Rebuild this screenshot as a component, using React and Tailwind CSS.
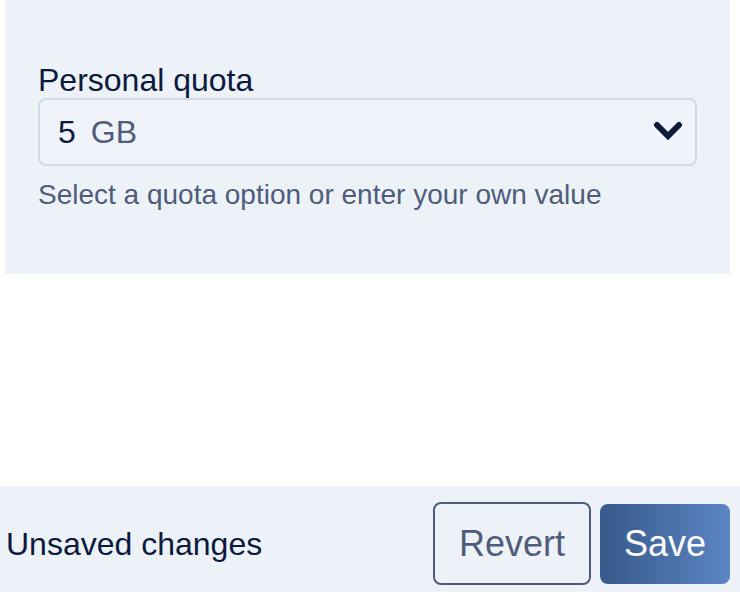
export default function App() {
  return (
    <div className="w-[740px] h-[592px] bg-white flex flex-col overflow-hidden" style={{ fontFamily: '"Liberation Sans", Arial, sans-serif' }}>
      <div className="ml-[5px] w-[725px] h-[274px] bg-[#edf2f9] pl-[33px] pr-[33px] pt-[62px] flex flex-col">
        <label className="text-[32px] leading-[36px] text-[#0b1a3d]">Personal quota</label>
        <div className="h-[68px] w-[659px] border-2 border-[#cfdbeb] rounded-[8px] bg-[#f0f4fa] flex items-center pl-[18px] pr-[12px]">
          <span className="text-[32px] leading-[36px] text-[#0b1a3d]">5</span>
          <span className="ml-[15px] text-[32px] leading-[36px] text-[#4f5d7b]">GB</span>
          <div className="flex-1" />
          <svg width="30" height="22" viewBox="0 0 30 22" fill="none">
            <polyline points="4,4 15,15 26,4" stroke="#0b1a3d" strokeWidth="6" strokeLinecap="round" strokeLinejoin="miter" />
          </svg>
        </div>
        <p className="mt-[11px] text-[28px] leading-[36px] text-[#4f5d7b]">Select a quota option or enter your own value</p>
      </div>
      <div className="flex-1" />
      <div className="h-[106px] bg-[#edf2f9] flex items-center pt-[9px] pl-[6px] pr-[10px]">
        <span className="text-[32px] leading-[36px] text-[#0b1a3d]">Unsaved changes</span>
        <div className="flex-1" />
        <button className="w-[158px] h-[83px] border-2 border-[#4f5d7b] rounded-[8px] text-[36px] leading-[40px] text-[#4f5d7b] flex items-center justify-center">Revert</button>
        <button className="ml-[9px] w-[130px] h-[80px] rounded-[8px] bg-gradient-to-r from-[#38598b] to-[#5b85c3] text-[36px] leading-[40px] text-white flex items-center justify-center">Save</button>
      </div>
    </div>
  );
}
